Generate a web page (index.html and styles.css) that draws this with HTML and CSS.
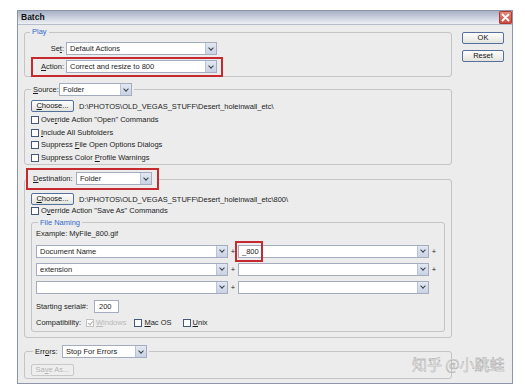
FILE: index.html
```html
<!DOCTYPE html>
<html lang="en">
<head>
    <meta charset="UTF-8">
    <title>Batch</title>
    <link rel="stylesheet" href="styles.css">
</head>
<body>

<div class="dialog">
    <div class="titlebar">
        <span class="title">Batch</span>
        <span class="close">
            <svg width="13" height="13" viewBox="0 0 13 13"><path d="M3.5 3.5l6 6M9.5 3.5l-6 6" stroke="#fff" stroke-width="1.8" stroke-linecap="round"/></svg>
        </span>
    </div>

    <div class="content">
        <div class="main">

            <fieldset class="group play">
                <legend class="caption">Play</legend>
                <div class="row boxed">
                    <label class="lbl">Se<u>t</u>:</label>
                    <div class="select w151"><span class="val">Default Actions</span><span class="arrow"></span></div>
                </div>
                <div class="row boxed marked action">
                    <label class="lbl"><u>A</u>ction:</label>
                    <div class="select w151"><span class="val">Correct and resize to 800</span><span class="arrow"></span></div>
                </div>
            </fieldset>

            <fieldset class="group source">
                <legend class="row head">
                    <label class="lbl-src"><u>S</u>ource:</label>
                    <div class="select w73"><span class="val">Folder</span><span class="arrow"></span></div>
                </legend>
                <div class="choose-row">
                    <button class="btn small"><u>C</u>hoose...</button>
                    <span class="path">D:\PHOTOS\OLD_VEGAS_STUFF\Desert_holeinwall_etc\</span>
                </div>
                <div class="check"><i class="box"></i><span>Ove<u>r</u>ride Action "Open" Commands</span></div>
                <div class="check"><i class="box"></i><span><u>I</u>nclude All Subfolders</span></div>
                <div class="check"><i class="box"></i><span>Suppress <u>F</u>ile Open Options Dialogs</span></div>
                <div class="check"><i class="box"></i><span>Suppress Color <u>P</u>rofile Warnings</span></div>
            </fieldset>

            <fieldset class="group dest">
                <legend class="row head marked dest-head">
                    <label class="lbl-dest"><u>D</u>estination:</label>
                    <div class="select w76"><span class="val">Folder</span><span class="arrow"></span></div>
                </legend>
                <div class="choose-row dest-choose">
                    <button class="btn small"><u>C</u>hoose...</button>
                    <span class="path">D:\PHOTOS\OLD_VEGAS_STUFF\Desert_holeinwall_etc\800\</span>
                </div>
                <div class="check"><i class="box"></i><span>O<u>v</u>erride Action "Save As" Commands</span></div>

                <fieldset class="group naming">
                    <legend class="caption">File Naming</legend>
                    <div class="example">Example: MyFile_800.gif</div>

                    <div class="name-row">
                        <div class="select w192"><span class="val">Document Name</span><span class="arrow"></span></div>
                        <span class="plus">+</span>
                        <div class="slot">
                            <div class="select w191"><span class="val">_800</span><span class="arrow"></span></div>
                            <span class="highlight"></span>
                        </div>
                        <span class="plus">+</span>
                    </div>
                    <div class="name-row">
                        <div class="select w192"><span class="val">extension</span><span class="arrow"></span></div>
                        <span class="plus">+</span>
                        <div class="select w191"><span class="val"></span><span class="arrow"></span></div>
                        <span class="plus">+</span>
                    </div>
                    <div class="name-row">
                        <div class="select w192"><span class="val"></span><span class="arrow"></span></div>
                        <span class="plus">+</span>
                        <div class="select w191"><span class="val"></span><span class="arrow"></span></div>
                    </div>

                    <div class="serial-row">
                        <label class="lbl-serial">Starting serial#:</label>
                        <div class="input w25">200</div>
                    </div>
                    <div class="compat-row">
                        <span class="lbl-compat">Compatibility:</span>
                        <span class="check inline disabled"><i class="box ticked"></i><span><u>W</u>indows</span></span>
                        <span class="check inline"><i class="box"></i><span><u>M</u>ac OS</span></span>
                        <span class="check inline"><i class="box"></i><span><u>U</u>nix</span></span>
                    </div>
                </fieldset>
            </fieldset>

            <fieldset class="group errors">
                <legend class="row head err-head">
                    <label class="lbl-err">Err<u>o</u>rs:</label>
                    <div class="select w85"><span class="val">Stop For Errors</span><span class="arrow"></span></div>
                </legend>
                <button class="btn small save" disabled>Sa<u>v</u>e As...</button>
            </fieldset>

        </div>

        <div class="side">
            <button class="btn big ok">OK</button>
            <button class="btn big reset">Reset</button>
        </div>
    </div>

    <div class="watermark">知乎 @小跳蛙</div>
</div>

</body>
</html>
```

FILE: styles.css
```css
body {
    margin: 0;
    background-color: #fff;
    font-family: "Liberation Sans", Arial, sans-serif;
    font-size: 7.5px;
    color: #1c1c1c;
}

u {
    text-decoration: underline;
    text-underline-offset: 1px;
}

.dialog {
    position: relative;
    margin: 10px 0 0 17px;
    width: 494px;
    height: 372px;
    border: 1px solid #8c96a8;
    background-color: #ececec;
}

.titlebar {
    height: 13px;
    display: flex;
    justify-content: space-between;
    align-items: flex-start;
    padding-left: 3px;
    background: linear-gradient(#a7b0c5, #eef0f5);
    border-bottom: 1px solid #b6bdca;
}

.title {
    font-weight: bold;
    font-size: 8.5px;
    line-height: 13px;
    color: #111;
}

.close {
    width: 13px;
    height: 13px;
    border-radius: 2px;
    background: linear-gradient(#e98a7f, #c9473d);
    box-shadow: inset 0 0 0 1px #b03a30;
}

.close svg {
    display: block;
}

.content {
    display: flex;
    padding: 2px 0 0 6px;
}

.main {
    width: 428px;
}

.side {
    display: flex;
    flex-direction: column;
    margin: 5px 0 0 10px;
}

/* group boxes */
.group {
    margin: 0;
    padding: 0;
    min-width: 0;
    border: 1px solid #c4c4c4;
    border-radius: 3px;
}

.caption {
    margin-left: 5px;
    padding: 0 2px;
    line-height: 10px;
    color: #3668c9;
}

.row {
    display: flex;
    align-items: center;
}

.boxed {
    width: 192px;
    box-sizing: border-box;
    margin-left: 6px;
    padding: 1px 0 2px;
    border: 2px solid transparent;
}

.marked {
    border: 2px solid #c62a2f;
}

.play .boxed:first-of-type {
    margin-top: 2px;
}

.action {
    margin-top: -2px;
    margin-bottom: -1px;
}

.lbl {
    width: 31px;
    text-align: right;
    margin-right: 2px;
}

/* select boxes */
.select,
.input {
    display: flex;
    height: 13px;
    box-sizing: border-box;
    border: 1px solid #a4adbf;
    background-color: #fff;
    line-height: 11px;
}

.select .val {
    flex: 1;
    padding-left: 3px;
    white-space: nowrap;
    overflow: hidden;
}

.select .arrow {
    width: 10px;
    margin: 0;
    display: flex;
    align-items: center;
    justify-content: center;
    background: linear-gradient(#e3e8f2, #c9d2e4);
    border-left: 1px solid #b9c3d6;
}

.select .arrow::before {
    content: '';
    width: 3px;
    height: 3px;
    margin-top: -2px;
    border-right: 1.5px solid #3a3f4a;
    border-bottom: 1.5px solid #3a3f4a;
    transform: rotate(45deg);
}

.input {
    padding-left: 4px;
}

.w151 { width: 151px; }
.w73 { width: 73px; }
.w76 { width: 76px; }
.w85 { width: 85px; }
.w191 { width: 191px; }
.w192 { width: 192px; }
.w25 { width: 25px; }

/* legends holding a field */
.head {
    padding: 0 2px;
}

.source {
    margin-top: 6px;
}

.source .head {
    margin-left: 6px;
}

.lbl-src {
    width: 24px;
    margin-right: 2px;
}

.dest {
    margin-top: 3px;
}

.dest-head {
    margin-left: 1px;
    padding: 2px 5px 3px 5px;
}

.lbl-dest {
    width: 41px;
    margin-right: 2px;
}

.errors {
    margin-top: 7px;
}

.err-head {
    margin-left: 8px;
}

.lbl-err {
    width: 25px;
    margin-right: 2px;
}

/* buttons */
.btn {
    font-family: inherit;
    font-size: 7.5px;
    color: #111;
    padding: 0;
    border: 1px solid #56709e;
    border-radius: 2px;
    background: linear-gradient(#fefefe, #e4e4de);
    line-height: 10px;
}

.btn.small {
    width: 43px;
    height: 12px;
}

.btn.big {
    width: 42px;
    height: 12px;
}

.btn.reset {
    margin-top: 6px;
}

.save {
    display: block;
    width: 45px;
    height: 11px;
    margin: 6px 0 2px 6px;
    color: #b4b4b4;
    border-color: #c8c8c8;
    background: #eeeeee;
}

.choose-row {
    display: flex;
    align-items: center;
    margin: 4px 0 2px 6px;
}

.dest-choose {
    margin: 3px 0 0 6px;
}

.path {
    margin-left: 5px;
}

/* check boxes */
.check {
    display: flex;
    align-items: center;
    margin-left: 6px;
    line-height: 12.5px;
}

.box {
    width: 8px;
    height: 8px;
    box-sizing: border-box;
    margin-right: 2px;
    border: 1px solid #44597a;
    background-color: #fff;
    position: relative;
}

.check.inline {
    margin-left: 0;
    display: inline-flex;
}

.check.disabled {
    color: #b8b8b8;
}

.disabled .box {
    border-color: #c2c2c2;
}

.ticked::after {
    content: '';
    position: absolute;
    left: 1.5px;
    top: 0;
    width: 2px;
    height: 4px;
    border-right: 1px solid #b0b0b0;
    border-bottom: 1px solid #b0b0b0;
    transform: rotate(40deg);
}

/* file naming */
.naming {
    margin: 0 6px 5px 6px;
    padding: 0 4px 2px 4px;
}

.naming .caption {
    margin-left: 2px;
}

.example {
    line-height: 12px;
}

.name-row {
    display: flex;
    align-items: center;
    margin-top: 5px;
}

.name-row:first-of-type {
    margin-top: 6px;
}

.plus {
    width: 10px;
    text-align: center;
}

.slot {
    position: relative;
}

.highlight {
    position: absolute;
    left: -3px;
    top: -4px;
    width: 28px;
    height: 21px;
    box-sizing: border-box;
    border: 2px solid #c62a2f;
}

.serial-row {
    display: flex;
    align-items: center;
    margin-top: 6px;
}

.lbl-serial {
    width: 58px;
}

.compat-row {
    display: flex;
    align-items: center;
    margin-top: 4px;
    line-height: 12px;
}

.lbl-compat {
    width: 50px;
}

.compat-row .disabled {
    margin-right: 8px;
}

.compat-row .check:nth-child(3) {
    margin-right: 11px;
}

.watermark {
    position: absolute;
    left: 394px;
    top: 344px;
    font-family: "Noto Sans CJK SC", sans-serif;
    font-size: 15px;
    line-height: 18px;
    color: #f3f3f3;
    -webkit-text-stroke: 0.4px #9c9c9c;
    white-space: nowrap;
}
```
